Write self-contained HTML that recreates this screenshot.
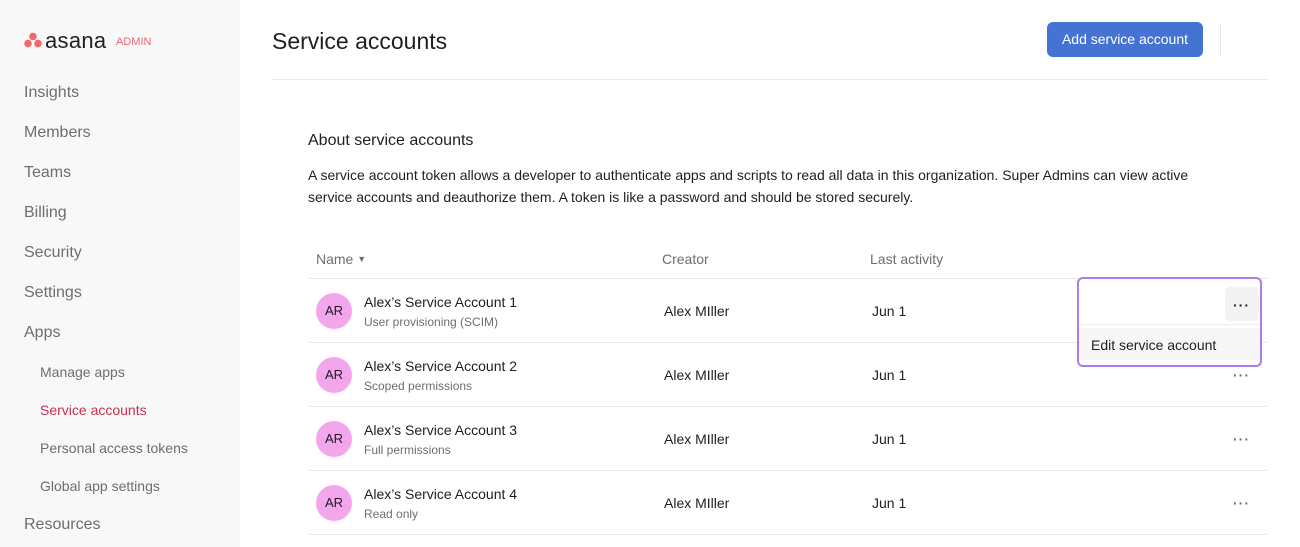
<!DOCTYPE html>
<html><head><style>
*{margin:0;padding:0;box-sizing:border-box}
body{width:1300px;height:547px;overflow:hidden;background:#fff;font-family:"Liberation Sans",sans-serif;color:#1e1f21;position:relative}
.side{position:absolute;left:0;top:0;width:240px;height:547px;background:#f9f8f8}
.nav{position:absolute;left:24px;font-size:16px;color:#6d6e6f}
.sub{position:absolute;left:40px;font-size:14px;color:#6d6e6f}
.abs{position:absolute}
.line{position:absolute;height:1px;background:#e8e8e8}
.av{position:absolute;left:316px;width:36px;height:36px;border-radius:50%;background:#f4a6ec;font-size:13px;text-align:center;line-height:36px;color:#1e1f21}
.n{position:absolute;left:364px;font-size:14px}
.d{position:absolute;left:364px;font-size:12px;color:#6d6e6f}
.c{position:absolute;left:664px;font-size:14px}
.l{position:absolute;left:872px;font-size:14px}
.dots{position:absolute;left:1233px;font-size:14px;color:#6d6e6f;letter-spacing:1px;font-weight:bold}
</style></head><body>
<div class="side">
 <svg class="abs" style="left:24px;top:32px" width="18" height="16"><circle cx="9" cy="4.5" r="3.8" fill="#f06a6a"/><circle cx="4" cy="11.5" r="3.8" fill="#f06a6a"/><circle cx="14" cy="11.5" r="3.8" fill="#f06a6a"/></svg>
 <div class="abs" style="left:45px;top:28px;font-size:22px;color:#1e1f21;letter-spacing:0.3px">asana</div>
 <div class="abs" style="left:116px;top:36px;font-size:11px;color:#e8697a">ADMIN</div>
 <div class="nav" style="top:84px">Insights</div>
 <div class="nav" style="top:124px">Members</div>
 <div class="nav" style="top:164px">Teams</div>
 <div class="nav" style="top:204px">Billing</div>
 <div class="nav" style="top:244px">Security</div>
 <div class="nav" style="top:284px">Settings</div>
 <div class="nav" style="top:324px">Apps</div>
 <div class="sub" style="top:364px">Manage apps</div>
 <div class="sub" style="top:402px;color:#c92f54">Service accounts</div>
 <div class="sub" style="top:440px">Personal access tokens</div>
 <div class="sub" style="top:478px">Global app settings</div>
 <div class="nav" style="top:516px">Resources</div>
</div>
<div class="abs" style="left:272px;top:28px;font-size:23px">Service accounts</div>
<div class="abs" style="left:1047px;top:22px;width:156px;height:35px;background:#4573d2;border-radius:6px;color:#fff;font-size:14px;text-align:center;line-height:35px">Add service account</div>
<div class="abs" style="left:1220px;top:25px;width:1px;height:30px;background:#e8e8e8"></div>
<div class="line" style="left:272px;top:79px;width:996px"></div>
<div class="abs" style="left:308px;top:132px;font-size:16px">About service accounts</div>
<div class="abs" style="left:308px;top:164px;font-size:14px;line-height:22px;width:925px">A service account token allows a developer to authenticate apps and scripts to read all data in this organization. Super Admins can view active service accounts and deauthorize them. A token is like a password and should be stored securely.</div>
<div class="abs" style="left:316px;top:251px;font-size:14px;color:#6d6e6f">Name <span style="font-size:9px;vertical-align:2px">▼</span></div>
<div class="abs" style="left:662px;top:251px;font-size:14px;color:#6d6e6f">Creator</div>
<div class="abs" style="left:870px;top:251px;font-size:14px;color:#6d6e6f">Last activity</div>
<div class="line" style="left:308px;top:278px;width:960px"></div>
<div class="line" style="left:308px;top:342px;width:960px"></div>
<div class="line" style="left:308px;top:406px;width:960px"></div>
<div class="line" style="left:308px;top:470px;width:960px"></div>
<div class="line" style="left:308px;top:534px;width:960px"></div>

<div class="av" style="top:293px">AR</div><div class="n" style="top:294px">Alex’s Service Account 1</div><div class="d" style="top:315px">User provisioning (SCIM)</div><div class="c" style="top:303px">Alex MIller</div><div class="l" style="top:303px">Jun 1</div>
<div class="av" style="top:357px">AR</div><div class="n" style="top:358px">Alex’s Service Account 2</div><div class="d" style="top:379px">Scoped permissions</div><div class="c" style="top:367px">Alex MIller</div><div class="l" style="top:367px">Jun 1</div><div class="dots" style="top:367px">···</div>
<div class="av" style="top:421px">AR</div><div class="n" style="top:422px">Alex’s Service Account 3</div><div class="d" style="top:443px">Full permissions</div><div class="c" style="top:431px">Alex MIller</div><div class="l" style="top:431px">Jun 1</div><div class="dots" style="top:431px">···</div>
<div class="av" style="top:485px">AR</div><div class="n" style="top:486px">Alex’s Service Account 4</div><div class="d" style="top:507px">Read only</div><div class="c" style="top:495px">Alex MIller</div><div class="l" style="top:495px">Jun 1</div><div class="dots" style="top:495px">···</div>

<div class="abs" style="left:1077px;top:277px;width:185px;height:90px;border:2px solid #a77fe8;border-radius:6px;background:#fff;overflow:hidden">
 <div class="abs" style="left:146px;top:8px;width:34px;height:34px;background:#f3f3f3;border-radius:4px"></div>
 <div class="abs" style="left:154px;top:18px;font-size:14px;font-weight:bold;color:#1e1f21;letter-spacing:1px">···</div>
 <div class="abs" style="left:0;top:45px;width:181px;height:1px;background:#eee"></div>
 <div class="abs" style="left:0;top:49px;width:181px;height:32px;background:#f6f6f6"></div>
 <div class="abs" style="left:12px;top:58px;font-size:14px">Edit service account</div>
</div>
</body></html>
